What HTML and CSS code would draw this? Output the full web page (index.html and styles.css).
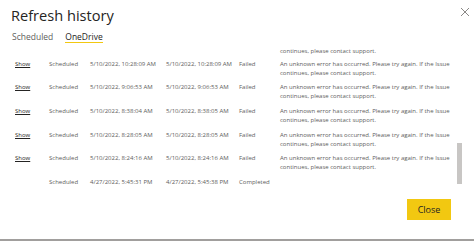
FILE: index.html
```html
<!DOCTYPE html>
<html lang="en">

<head>
    <meta charset="UTF-8">
    <meta name="viewport" content="width=device-width, initial-scale=1.0">
    <title>Refresh history</title>
    <link rel="stylesheet" href="styles.css">
</head>

<body>
    <div class="dialog">
        <header class="dialog-header">
            <h1>Refresh history</h1>
            <button class="dismiss" aria-label="Close">
                <svg width="10" height="10" viewBox="0 0 10 10">
                    <path d="M1 1 L9 9 M9 1 L1 9" stroke="#8a8886" stroke-width="1" fill="none" />
                </svg>
            </button>
        </header>

        <nav class="tabs">
            <span class="tab">Scheduled</span>
            <span class="tab active">OneDrive</span>
        </nav>

        <!-- history list, scrolled near the bottom -->
        <div class="history">
            <div class="rows">
                <div class="row partial">
                    <span></span>
                    <span></span>
                    <span></span>
                    <span></span>
                    <span></span>
                    <span class="message">continues, please contact support.</span>
                </div>
                <div class="row">
                    <a class="show" href="#">Show</a>
                    <span>Scheduled</span>
                    <span>5/10/2022, 10:28:09 AM</span>
                    <span>5/10/2022, 10:28:09 AM</span>
                    <span>Failed</span>
                    <span class="message">An unknown error has occurred. Please try again. If the Issue continues, please contact support.</span>
                </div>
                <div class="row">
                    <a class="show" href="#">Show</a>
                    <span>Scheduled</span>
                    <span>5/10/2022, 9:06:53 AM</span>
                    <span>5/10/2022, 9:06:53 AM</span>
                    <span>Failed</span>
                    <span class="message">An unknown error has occurred. Please try again. If the Issue continues, please contact support.</span>
                </div>
                <div class="row">
                    <a class="show" href="#">Show</a>
                    <span>Scheduled</span>
                    <span>5/10/2022, 8:38:04 AM</span>
                    <span>5/10/2022, 8:38:05 AM</span>
                    <span>Failed</span>
                    <span class="message">An unknown error has occurred. Please try again. If the Issue continues, please contact support.</span>
                </div>
                <div class="row">
                    <a class="show" href="#">Show</a>
                    <span>Scheduled</span>
                    <span>5/10/2022, 8:28:05 AM</span>
                    <span>5/10/2022, 8:28:05 AM</span>
                    <span>Failed</span>
                    <span class="message">An unknown error has occurred. Please try again. If the Issue continues, please contact support.</span>
                </div>
                <div class="row">
                    <a class="show" href="#">Show</a>
                    <span>Scheduled</span>
                    <span>5/10/2022, 8:24:16 AM</span>
                    <span>5/10/2022, 8:24:16 AM</span>
                    <span>Failed</span>
                    <span class="message">An unknown error has occurred. Please try again. If the Issue continues, please contact support.</span>
                </div>
                <div class="row">
                    <span></span>
                    <span>Scheduled</span>
                    <span>4/27/2022, 5:45:31 PM</span>
                    <span>4/27/2022, 5:45:38 PM</span>
                    <span>Completed</span>
                    <span class="message"></span>
                </div>
            </div>
            <div class="scroll-thumb"></div>
        </div>

        <footer class="dialog-footer">
            <button class="close">Close</button>
        </footer>
    </div>
    <div class="bottom-bar"></div>
</body>

</html>
```

FILE: styles.css
```css
body {
    font-family: 'Open Sans', 'Noto Sans', sans-serif;
    margin: 0;
    padding: 0;
    background-color: #ffffff;
    color: #252423;
}

.dialog {
    height: 239px;
    display: flex;
    flex-direction: column;
    overflow: hidden;
}

.dialog-header {
    display: flex;
    justify-content: space-between;
    align-items: flex-start;
    padding: 5px 2px 0 11px;
}

.dialog-header h1 {
    margin: 0;
    font-size: 14.6px;
    font-weight: 400;
    line-height: 20px;
}

.dismiss {
    border: none;
    background: none;
    padding: 0;
    width: 10px;
    height: 10px;
    margin: 0 2px 0 0;
}

.tabs {
    display: flex;
    gap: 12px;
    padding: 6px 0 0 12px;
    font-size: 8.5px;
}

.tab {
    color: #605e5c;
    padding-bottom: 0;
    border-bottom: 1px solid transparent;
}

.tab.active {
    color: #252423;
    border-bottom-color: #f2c811;
}

/* the list is scrolled, so only the end of the first row shows */
.history {
    position: relative;
    height: 143px;
    margin-top: 4px;
    overflow: hidden;
}

.rows {
    padding-left: 15px;
}

.row {
    display: grid;
    grid-template-columns: 34px 41px 76px 73px 41px 172px;
    height: 23.7px;
    padding-top: 3px;
    box-sizing: border-box;
    font-size: 6px;
    line-height: 9px;
    color: #605e5c;
}

.row.partial {
    height: 9.5px;
    padding-top: 0;
}

.show {
    color: #252423;
    text-decoration: underline;
}

.scroll-thumb {
    position: absolute;
    right: 12px;
    top: 96px;
    width: 5px;
    height: 41px;
    background-color: #c8c6c4;
}

.dialog-footer {
    display: flex;
    justify-content: flex-end;
    padding: 9px 23px 0 0;
}

.close {
    width: 44px;
    height: 21px;
    border: none;
    background-color: #f2c811;
    color: #252423;
    font-family: inherit;
    font-size: 9px;
    padding: 0;
}

.bottom-bar {
    height: 2px;
    background-color: #a19f9d;
}
```
